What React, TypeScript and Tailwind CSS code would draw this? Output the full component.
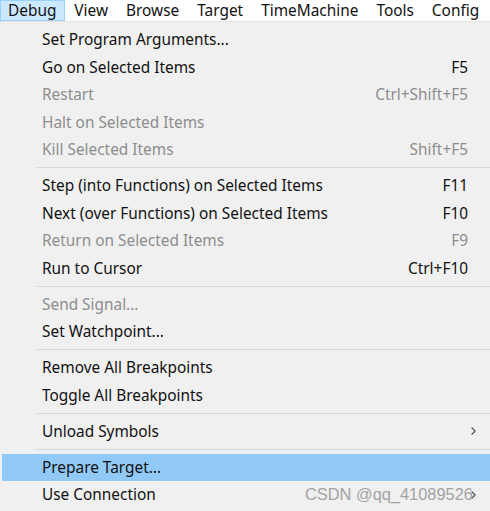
import { ChevronRight } from "lucide-react";

type Item = { label: string; shortcut?: string; disabled?: boolean; submenu?: boolean; active?: boolean };

const groups: Item[][] = [
  [
    { label: "Set Program Arguments..." },
    { label: "Go on Selected Items", shortcut: "F5" },
    { label: "Restart", shortcut: "Ctrl+Shift+F5", disabled: true },
    { label: "Halt on Selected Items", disabled: true },
    { label: "Kill Selected Items", shortcut: "Shift+F5", disabled: true },
  ],
  [
    { label: "Step (into Functions) on Selected Items", shortcut: "F11" },
    { label: "Next (over Functions) on Selected Items", shortcut: "F10" },
    { label: "Return on Selected Items", shortcut: "F9", disabled: true },
    { label: "Run to Cursor", shortcut: "Ctrl+F10" },
  ],
  [{ label: "Send Signal...", disabled: true }, { label: "Set Watchpoint..." }],
  [{ label: "Remove All Breakpoints" }, { label: "Toggle All Breakpoints" }],
  [{ label: "Unload Symbols", submenu: true }],
  [{ label: "Prepare Target...", active: true }, { label: "Use Connection", submenu: true }],
];

const menus = ["Debug", "View", "Browse", "Target", "TimeMachine", "Tools", "Config"];

function Row({ item }: { item: Item }) {
  return (
    <div
      className={`relative flex h-[27.5px] items-center pl-[40px] pr-[22px] ml-[2px] ${
        item.active ? "bg-[#91c9f7]" : ""
      } ${item.disabled ? "text-[#8d8d8d]" : "text-[#111]"}`}
    >
      <span className="flex-1 whitespace-nowrap">{item.label}</span>
      {item.shortcut && <span className="whitespace-nowrap">{item.shortcut}</span>}
      {item.submenu && (
        <ChevronRight className="absolute right-[10px] top-1/2 h-[13px] w-[13px] -translate-y-1/2 text-[#555]" strokeWidth={2} />
      )}
    </div>
  );
}

export default function App() {
  return (
    <div className="relative h-[511px] w-[490px] overflow-hidden bg-[#f0f0f0] text-[15.4px] font-['Noto_Sans',sans-serif]">
      {/* menu bar */}
      <div className="flex h-[21px] items-center bg-white border-b border-[#e3e3e3] box-content text-[15.4px] text-[#111]">
        {menus.map((m, i) => (
          <div
            key={m}
            className={`flex h-[21px] items-center leading-none ${
              i === 0 ? "bg-[#cce8ff] border border-[#99d1ff] pl-[7px] pr-[8px]" : "px-[9px]"
            }`}
          >
            {m}
          </div>
        ))}
      </div>

      {/* dropdown */}
      <div className="pt-[4px]">
        {groups.map((g, gi) => (
          <div key={gi}>
            {gi > 0 && (
              <div className="flex h-[8.5px] items-center pl-[36px]">
                <div className="h-px w-full bg-[#d7d7d7]" />
              </div>
            )}
            {g.map((item) => (
              <Row key={item.label} item={item} />
            ))}
          </div>
        ))}
      </div>

      <div className="absolute left-[305px] top-[486px] text-[16.4px] text-[#a3a3a3] font-['Liberation_Sans',sans-serif] leading-none">
        CSDN @qq_41089526
      </div>
    </div>
  );
}
